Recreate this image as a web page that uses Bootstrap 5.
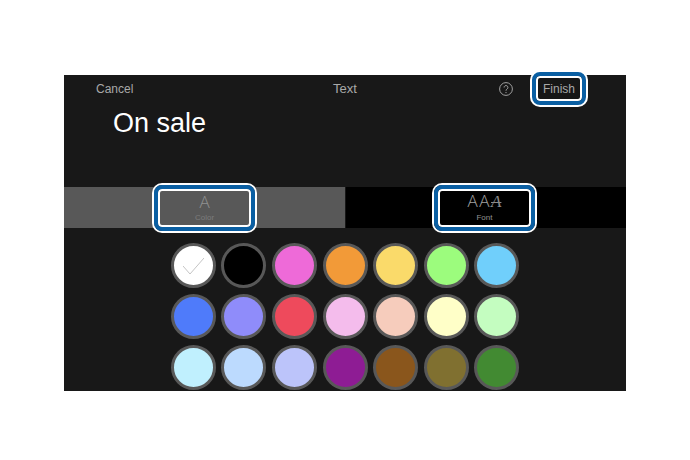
<!DOCTYPE html>
<html lang="en">
<head>
<meta charset="utf-8">
<title>Text</title>
<link href="https://cdn.jsdelivr.net/npm/bootstrap@5.3.0/dist/css/bootstrap.min.css" rel="stylesheet">
<style>
html,body{height:460px;overflow:hidden;background:#fff;font-family:"Liberation Sans",Arial,sans-serif}
.stage{padding:75px 63px 0 64px}
.phone{width:562px;height:316px;background:#181818}
.topbar{height:27px;color:#a8a8a8;font-size:12px}
.side{flex:1 1 0}
.cancel-txt{margin-left:32px}
.title-txt{font-size:13px}
.help{width:14px;height:14px;margin-right:19px}
.mark-box{border:4px solid #0a5fa3;border-radius:8px;box-shadow:0 0 0 2px #fff,inset 0 0 0 2px #fff;flex:none}
.finish-box{width:54px;height:33px;margin-right:40px;background:#161616;font-size:12px}
.sale{font-size:27px;line-height:32px;color:#fff;padding-left:49px;margin-top:5px;margin-bottom:48px}
.tabs{height:41px}
.tab-l{width:281px;background:#585858;margin-right:1px}
.tab-r{flex:1;background:#000}
.tab-box{width:101px;height:46px}
.tab-box-f{margin-right:3px}
.glyph{font-family:"Open Sans","Liberation Sans",sans-serif;font-size:17px;line-height:18px;font-weight:300}
.glyph-a{color:#909090}
.glyph-f{color:#a0a0a0;letter-spacing:1.5px}
.script{font-family:"Liberation Serif",serif;font-style:italic;color:#8a8a8a;text-decoration:line-through;text-decoration-thickness:1px;letter-spacing:0}
.cap{font-size:8px;line-height:10px;margin-top:2px}
.cap-a{color:#7c7c7c}
.cap-f{color:#909090}
.swatches{display:grid;grid-template-columns:repeat(7,45px);column-gap:5.6px;row-gap:6px;justify-content:center;padding-top:15px}
.dot{width:45px;height:45px;border-radius:50%;border:3px solid #585858;filter:blur(.5px)}
.tick{width:21px;height:16px}
</style>
</head>
<body>
<div class="stage">
  <div class="phone d-flex flex-column">
    <div class="topbar d-flex align-items-center">
      <div class="side"><span class="cancel-txt">Cancel</span></div>
      <div class="title-txt">Text</div>
      <div class="side d-flex justify-content-end align-items-center">
        <svg class="help" viewBox="0 0 14 14" aria-hidden="true"><circle cx="7" cy="7" r="6.4" fill="none" stroke="#b0b0b0" stroke-width="0.9"/><path d="M5.1 5.5a1.9 1.9 0 1 1 3 1.5c-.7.5-1.1.9-1.1 1.7" fill="none" stroke="#b0b0b0" stroke-width="0.9"/><circle cx="7" cy="10.6" r=".6" fill="#b0b0b0"/></svg>
        <div class="mark-box finish-box d-flex align-items-center justify-content-center">Finish</div>
      </div>
    </div>
    <div class="sale">On sale</div>
    <div class="tabs d-flex">
      <div class="tab-l d-flex align-items-center justify-content-center">
        <div class="mark-box tab-box d-flex flex-column align-items-center justify-content-center">
          <div class="glyph glyph-a">A</div>
          <div class="cap cap-a">Color</div>
        </div>
      </div>
      <div class="tab-r d-flex align-items-center justify-content-center">
        <div class="mark-box tab-box tab-box-f d-flex flex-column align-items-center justify-content-center">
          <div class="glyph glyph-f">AA<span class="script">A</span></div>
          <div class="cap cap-f">Font</div>
        </div>
      </div>
    </div>
    <div class="swatches">
      <div class="dot d-flex align-items-center justify-content-center" style="background:#fff"><svg class="tick" viewBox="0 0 21 16" aria-hidden="true"><path d="M0 8l7 8L21 0" fill="none" stroke="#c4c4c4" stroke-width="1"/></svg></div>
      <div class="dot" style="background:#000"></div>
      <div class="dot" style="background:#ee6ad8"></div>
      <div class="dot" style="background:#f29a38"></div>
      <div class="dot" style="background:#fada6a"></div>
      <div class="dot" style="background:#9cfc7d"></div>
      <div class="dot" style="background:#70cffb"></div>
      <div class="dot" style="background:#4f7bfa"></div>
      <div class="dot" style="background:#8f8cfa"></div>
      <div class="dot" style="background:#ee4a5c"></div>
      <div class="dot" style="background:#f4bcec"></div>
      <div class="dot" style="background:#f6ccbc"></div>
      <div class="dot" style="background:#ffffc8"></div>
      <div class="dot" style="background:#c4fdc0"></div>
      <div class="dot" style="background:#c0f0fe"></div>
      <div class="dot" style="background:#bcdafe"></div>
      <div class="dot" style="background:#bcc4fa"></div>
      <div class="dot" style="background:#8e1c94"></div>
      <div class="dot" style="background:#8a561c"></div>
      <div class="dot" style="background:#807030"></div>
      <div class="dot" style="background:#428a32"></div>
    </div>
  </div>
</div>
<script src="https://cdn.jsdelivr.net/npm/bootstrap@5.3.0/dist/js/bootstrap.bundle.min.js"></script>
</body>
</html>
